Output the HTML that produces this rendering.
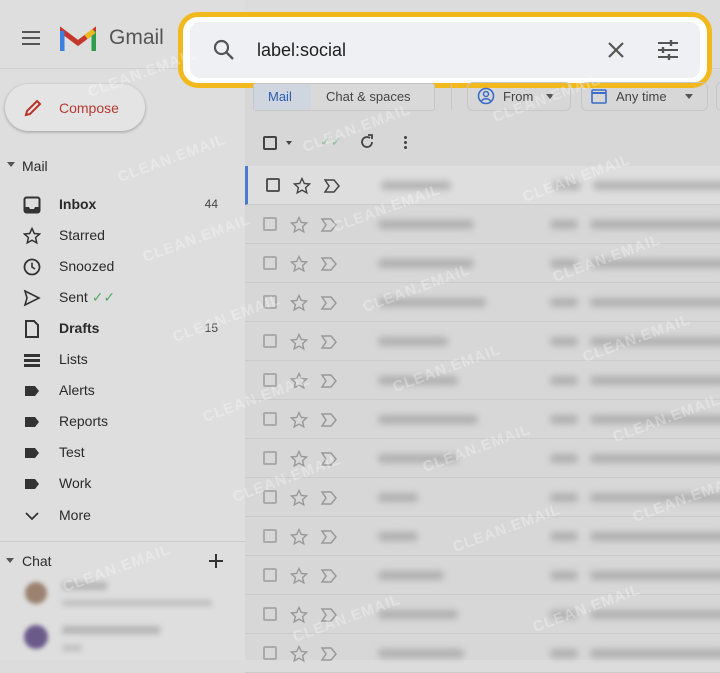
<!DOCTYPE html>
<html><head><style>
*{margin:0;padding:0;box-sizing:border-box}
body{width:720px;height:660px;overflow:hidden;background:#dcdcdc;font-family:"Liberation Sans",sans-serif;position:relative;color:#2a2a2a}
.abs{position:absolute}
.side{left:0;top:0;width:245px;height:660px;background:#dedede}
.main{left:245px;top:70px;width:475px;height:590px;background:#d7d7d7}
.nav{position:absolute;left:0;width:245px;height:31px;font-size:14px;line-height:31px}
.nav span.t{position:absolute;left:59px}
.nav span.c{position:absolute;right:27px;font-size:12px;color:#444}
.nav svg{position:absolute;left:23px;top:7px}
.blur{position:absolute;height:9px;background:#909090;filter:blur(3.5px);border-radius:4px;top:15px;opacity:.55}
.wm{position:absolute;color:rgba(255,255,255,.3);font-weight:bold;font-size:15px;transform:rotate(-20deg);white-space:nowrap;letter-spacing:1px}
</style></head><body>
<div class="abs side"></div>
<div class="abs" style="left:0;top:68px;width:720px;height:1px;background:#cfcfcf"></div>
<div class="abs main"></div>
<svg class="abs" style="left:22px;top:30px" width="20" height="16"><path d="M0 2h18M0 8h18M0 14h18" stroke="#555" stroke-width="2"/></svg>
<svg class="abs" style="left:60px;top:25px" width="36" height="27" viewBox="0 0 36 27"><path d="M2 26V6l16 12L34 6v20" fill="none" stroke="#c5362c" stroke-width="5"/><path d="M2 26V6" stroke="#3d7fe0" stroke-width="5"/><path d="M34 26V6" stroke="#2e9d4c" stroke-width="5"/><path d="M26 12l8-6" stroke="#efb820" stroke-width="5"/></svg>
<div class="abs" style="left:109px;top:26px;font-size:21px;color:#555">Gmail</div>
<div class="abs" style="left:178px;top:12px;width:534px;height:76px;border:5px solid #f1b91e;border-radius:20px;background:#fff"></div>
<div class="abs" style="left:190px;top:22px;width:510px;height:56px;border-radius:10px;background:#eef0f3"></div>
<svg class="abs" style="left:213px;top:39px" width="22" height="22"><circle cx="8.5" cy="8.5" r="6.5" fill="none" stroke="#555" stroke-width="2.2"/><path d="M13 13l7 7" stroke="#555" stroke-width="2.4"/></svg>
<div class="abs" style="left:257px;top:40px;font-size:18px;color:#1f1f1f">label:social</div>
<svg class="abs" style="left:607px;top:41px" width="18" height="18"><path d="M2 2l14 14M16 2L2 16" stroke="#555" stroke-width="2.2"/></svg>
<svg class="abs" style="left:656px;top:39px" width="24" height="22"><path d="M2 4h20M2 11h20M2 18h20" stroke="#555" stroke-width="2"/><path d="M15 1v6M7 8v6M13 15v6" stroke="#555" stroke-width="2.4"/></svg>
<div class="abs" style="left:5px;top:84px;width:140px;height:47px;border-radius:24px;background:#e4e4e4;box-shadow:0 1px 3px rgba(0,0,0,.3)"></div>
<svg class="abs" style="left:23px;top:98px" width="20" height="20"><path d="M3 17l1-4L14 3l3 3L7 16z" fill="none" stroke="#b93328" stroke-width="2"/></svg>
<div class="abs" style="left:59px;top:100px;font-size:14px;color:#b53a30">Compose</div>
<div class="abs" style="left:7px;top:162px;width:0;height:0;border:4px solid transparent;border-top:5px solid #555"></div>
<div class="abs" style="left:22px;top:158px;font-size:14px">Mail</div>
<div class="nav" style="top:189px;font-weight:bold"><svg width="18" height="18"><rect x="1.5" y="1.5" width="15" height="15" rx="2" fill="none" stroke="#333" stroke-width="2"/><path d="M2 11h4l1 2h4l1-2h4v5H2z" fill="#333"/></svg><span class="t">Inbox</span><span class="c" style="font-weight:normal">44</span></div>
<div class="nav" style="top:220px"><svg width="18" height="18"><path d="M9 1.5l2.3 5 5.3.5-4 3.6 1.2 5.3L9 13.2 4.2 15.9l1.2-5.3-4-3.6 5.3-.5z" fill="none" stroke="#333" stroke-width="1.5"/></svg><span class="t">Starred</span></div>
<div class="nav" style="top:251px"><svg width="18" height="18"><circle cx="9" cy="9" r="7.5" fill="none" stroke="#333" stroke-width="1.8"/><path d="M9 4.5V9l3 2" fill="none" stroke="#333" stroke-width="1.6"/></svg><span class="t">Snoozed</span></div>
<div class="nav" style="top:282px"><svg width="18" height="18"><path d="M2 2l14 7-14 7 2-7z" fill="none" stroke="#333" stroke-width="1.6"/></svg><span class="t">Sent <span style="color:#5aaa6e">✓✓</span></span></div>
<div class="nav" style="top:313px;font-weight:bold"><svg width="18" height="18"><path d="M3 1h8l4 4v12H3z" fill="none" stroke="#333" stroke-width="2"/></svg><span class="t">Drafts</span><span class="c" style="font-weight:normal">15</span></div>
<div class="nav" style="top:344px"><svg width="18" height="18"><path d="M1 3h16v3H1zM1 8h16v3H1zM1 13h16v3H1z" fill="#333"/></svg><span class="t">Lists</span></div>
<div class="nav" style="top:375px"><svg width="18" height="18"><path d="M2 4h10l4 5-4 5H2z" fill="#333"/></svg><span class="t">Alerts</span></div>
<div class="nav" style="top:406px"><svg width="18" height="18"><path d="M2 4h10l4 5-4 5H2z" fill="#333"/></svg><span class="t">Reports</span></div>
<div class="nav" style="top:437px"><svg width="18" height="18"><path d="M2 4h10l4 5-4 5H2z" fill="#333"/></svg><span class="t">Test</span></div>
<div class="nav" style="top:468px"><svg width="18" height="18"><path d="M2 4h10l4 5-4 5H2z" fill="#333"/></svg><span class="t">Work</span></div>
<div class="nav" style="top:500px"><svg width="18" height="18"><path d="M3 6l6 6 6-6" fill="none" stroke="#333" stroke-width="1.8"/></svg><span class="t">More</span></div>
<div class="abs" style="left:0;top:541px;width:245px;height:1px;background:#cbcbcb"></div>
<div class="abs" style="left:6px;top:558px;width:0;height:0;border:4px solid transparent;border-top:5px solid #555"></div>
<div class="abs" style="left:22px;top:553px;font-size:14px">Chat</div>
<svg class="abs" style="left:208px;top:553px" width="16" height="16"><path d="M8 1v14M1 8h14" stroke="#333" stroke-width="2"/></svg>
<div class="abs" style="left:25px;top:582px;width:22px;height:22px;border-radius:50%;background:#9a8170;filter:blur(2px)"></div>
<div class="abs" style="left:62px;top:582px;width:45px;height:8px;background:#999;filter:blur(3px);opacity:.6"></div>
<div class="abs" style="left:62px;top:600px;width:150px;height:6px;background:#aaa;filter:blur(3px);opacity:.6"></div>
<div class="abs" style="left:24px;top:625px;width:24px;height:24px;border-radius:50%;background:#6a5a8a;filter:blur(2px)"></div>
<div class="abs" style="left:62px;top:626px;width:98px;height:8px;background:#999;filter:blur(3px);opacity:.6"></div>
<div class="abs" style="left:62px;top:645px;width:20px;height:6px;background:#aaa;filter:blur(3px);opacity:.6"></div>
<div class="abs" style="left:253px;top:83px;width:182px;height:28px;border:1px solid #c6c6c6;border-radius:3px;background:#d9d9d9"></div>
<div class="abs" style="left:254px;top:84px;width:57px;height:26px;background:#cfd6e0"></div>
<div class="abs" style="left:268px;top:89px;font-size:13px;color:#2d5cb0">Mail</div>
<div class="abs" style="left:326px;top:89px;font-size:13px;color:#444">Chat &amp; spaces</div>
<div class="abs" style="left:451px;top:84px;width:1px;height:26px;background:#c6c6c6"></div>
<div class="abs" style="left:467px;top:82px;width:104px;height:29px;border:1px solid #c6c6c6;border-radius:6px"></div>
<svg class="abs" style="left:477px;top:87px" width="18" height="18"><circle cx="9" cy="9" r="7.5" fill="none" stroke="#3a6cc9" stroke-width="1.6"/><circle cx="9" cy="7" r="2.5" fill="none" stroke="#3a6cc9" stroke-width="1.5"/><path d="M4.5 14c2-3 7-3 9 0" fill="none" stroke="#3a6cc9" stroke-width="1.5"/></svg>
<div class="abs" style="left:503px;top:89px;font-size:13px;color:#444">From</div>
<div class="abs" style="left:546px;top:94px;border:4px solid transparent;border-top:5px solid #555"></div>
<div class="abs" style="left:581px;top:82px;width:127px;height:29px;border:1px solid #c6c6c6;border-radius:6px"></div>
<svg class="abs" style="left:590px;top:87px" width="18" height="18"><rect x="2" y="3" width="14" height="13" rx="1" fill="none" stroke="#3a6cc9" stroke-width="1.6"/><path d="M2 6h14" stroke="#3a6cc9" stroke-width="2"/></svg>
<div class="abs" style="left:616px;top:89px;font-size:13px;color:#444">Any time</div>
<div class="abs" style="left:685px;top:94px;border:4px solid transparent;border-top:5px solid #555"></div>
<div class="abs" style="left:716px;top:82px;width:10px;height:29px;border:1px solid #c6c6c6;border-radius:6px"></div>
<div class="abs" style="left:263px;top:136px;width:14px;height:14px;border:2px solid #444;border-radius:2px"></div>
<div class="abs" style="left:286px;top:141px;border:3.5px solid transparent;border-top:4px solid #444"></div>
<div class="abs" style="left:320px;top:134px;font-size:13px;color:#8fbf98">✓✓</div>
<svg class="abs" style="left:359px;top:134px" width="16" height="16"><path d="M13 8A5 5 0 1 1 11 4" fill="none" stroke="#444" stroke-width="1.8"/><path d="M9 1h4v4" fill="none" stroke="#444" stroke-width="1.8"/></svg>
<div class="abs" style="left:404px;top:136px;width:3px;height:3px;background:#444;box-shadow:0 5px #444,0 10px #444;border-radius:50%"></div>
<div id="rows"></div>
<script>
var h='',names=[70,96,96,108,70,80,100,80,40,40,66,80,86];
for(var i=0;i<13;i++){var t=166+i*39;
h+='<div class="abs" style="left:245px;top:'+t+'px;width:475px;height:39px;border-bottom:1px solid #cbcbcb;'+(i==0?'background:#dedede;border-left:3px solid #4a7bd0':'')+'">'
+'<div class="abs" style="left:18px;top:12px;width:14px;height:14px;border:2px solid '+(i==0?'#555':'#aaa')+';border-radius:2px"></div>'
+'<svg class="abs" style="left:45px;top:11px" width="18" height="18"><path d="M9 1.5l2.3 5 5.3.5-4 3.6 1.2 5.3L9 13.2 4.2 15.9l1.2-5.3-4-3.6 5.3-.5z" fill="none" stroke="'+(i==0?'#444':'#999')+'" stroke-width="1.4"/></svg>'
+'<svg class="abs" style="left:75px;top:12px" width="18" height="16"><path d="M2 2h9l5 6-5 6H2l4-6z" fill="none" stroke="'+(i==0?'#444':'#999')+'" stroke-width="1.5"/></svg>'
+'<div class="blur" style="left:133px;width:'+names[i]+'px"></div>'
+'<div class="blur" style="left:305px;width:28px"></div>'
+'<div class="blur" style="left:345px;width:140px"></div></div>';}
document.getElementById('rows').innerHTML=h;
</script>
<div class="wm" style="left:85px;top:65px">CLEAN.EMAIL</div>
<div class="wm" style="left:115px;top:150px">CLEAN.EMAIL</div>
<div class="wm" style="left:140px;top:230px">CLEAN.EMAIL</div>
<div class="wm" style="left:170px;top:310px">CLEAN.EMAIL</div>
<div class="wm" style="left:200px;top:390px">CLEAN.EMAIL</div>
<div class="wm" style="left:230px;top:470px">CLEAN.EMAIL</div>
<div class="wm" style="left:60px;top:560px">CLEAN.EMAIL</div>
<div class="wm" style="left:300px;top:120px">CLEAN.EMAIL</div>
<div class="wm" style="left:330px;top:200px">CLEAN.EMAIL</div>
<div class="wm" style="left:360px;top:280px">CLEAN.EMAIL</div>
<div class="wm" style="left:390px;top:360px">CLEAN.EMAIL</div>
<div class="wm" style="left:420px;top:440px">CLEAN.EMAIL</div>
<div class="wm" style="left:450px;top:520px">CLEAN.EMAIL</div>
<div class="wm" style="left:290px;top:610px">CLEAN.EMAIL</div>
<div class="wm" style="left:490px;top:90px">CLEAN.EMAIL</div>
<div class="wm" style="left:520px;top:170px">CLEAN.EMAIL</div>
<div class="wm" style="left:550px;top:250px">CLEAN.EMAIL</div>
<div class="wm" style="left:580px;top:330px">CLEAN.EMAIL</div>
<div class="wm" style="left:610px;top:410px">CLEAN.EMAIL</div>
<div class="wm" style="left:630px;top:490px">CLEAN.EMAIL</div>
<div class="wm" style="left:530px;top:600px">CLEAN.EMAIL</div>
</body></html>
